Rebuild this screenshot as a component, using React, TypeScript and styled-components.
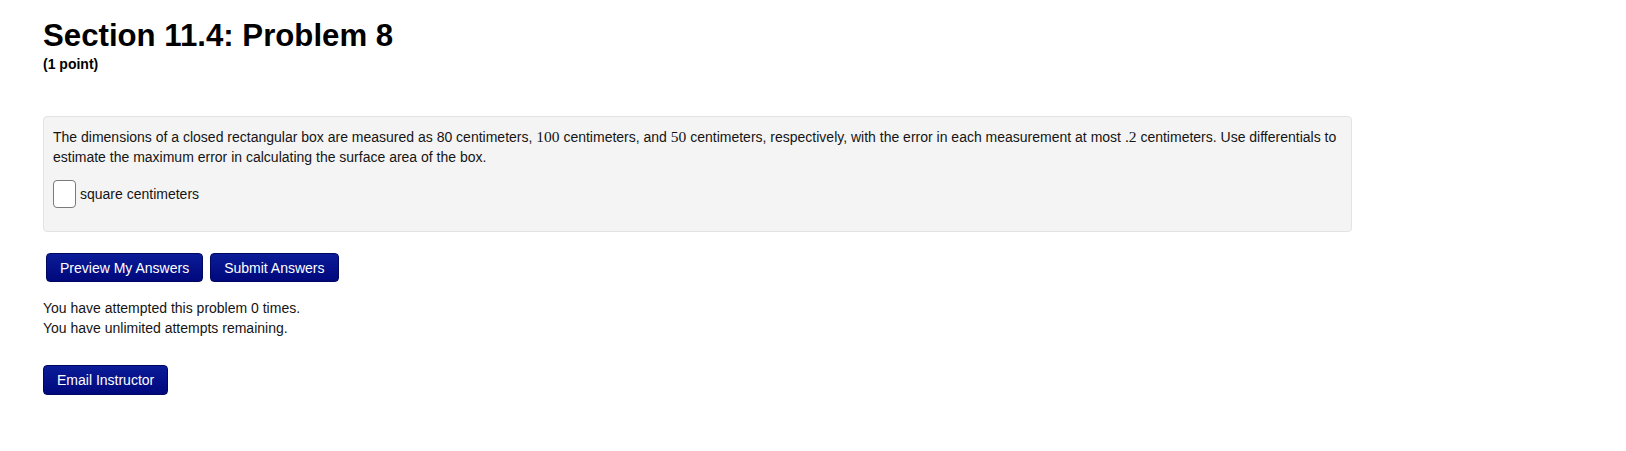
import React from "react";
import styled, { createGlobalStyle } from "styled-components";

const GlobalStyle = createGlobalStyle`
  html, body {
    margin: 0;
    padding: 0;
    background: #fff;
  }
  body {
    font-family: "Liberation Sans", Arial, sans-serif;
    font-size: 14px;
    color: #141414;
  }
`;

const Page = styled.div`
  padding: 18px 43px 40px;
  width: 1309px;
`;

const Title = styled.h1`
  font-size: 31.2px;
  font-weight: bold;
  margin: 0;
  line-height: 36px;
  color: #000;
`;

const Points = styled.div`
  font-size: 14px;
  font-weight: bold;
  margin-top: 2px;
  color: #000;
`;

const ProblemBox = styled.div`
  margin-top: 44px;
  background: #f4f4f4;
  border: 1px solid #e3e3e3;
  border-radius: 4px;
  padding: 10px 4px 23px 9px;
  line-height: 20px;
`;

const Paragraph = styled.p`
  margin: 0;
`;

const Num = styled.span`
  font-family: "Liberation Serif", "Times New Roman", serif;
  font-size: 15.5px;
  line-height: 1;
`;

const AnswerRow = styled.div`
  display: flex;
  align-items: center;
  gap: 4px;
  margin-top: 13px;
`;

const AnswerInput = styled.input`
  width: 23px;
  height: 28px;
  box-sizing: border-box;
  border: 1px solid #7a7a7a;
  border-radius: 4px;
  background: #fff;
  padding: 0;
`;

const ButtonRow = styled.div`
  display: flex;
  gap: 7px;
  margin-top: 21px;
  padding-left: 3px;
`;

const Button = styled.button<{ $tall?: boolean }>`
  height: ${(p) => (p.$tall ? "30px" : "29px")};
  padding: 0 13px;
  font-family: "Liberation Sans", Arial, sans-serif;
  font-size: 14px;
  color: #fff;
  border: 1px solid #00075e;
  border-radius: 4px;
  background: linear-gradient(#0b1c98, #00087c);
  cursor: pointer;
`;

const Attempts = styled.div`
  margin-top: 16px;
  line-height: 20px;
`;

const EmailRow = styled.div`
  margin-top: 27px;
`;

export default function App() {
  return (
    <>
      <GlobalStyle />
      <Page>
        <Title>Section 11.4: Problem 8</Title>
        <Points>(1 point)</Points>
        <ProblemBox>
          <Paragraph>
            The dimensions of a closed rectangular box are measured as 80 centimeters,{" "}
            <Num>100</Num> centimeters, and <Num>50</Num> centimeters, respectively, with the
            error in each measurement at most <Num>.2</Num> centimeters. Use differentials to
            estimate the maximum error in calculating the surface area of the box.
          </Paragraph>
          <AnswerRow>
            <AnswerInput type="text" aria-label="answer" />
            <span>square centimeters</span>
          </AnswerRow>
        </ProblemBox>
        <ButtonRow>
          <Button>Preview My Answers</Button>
          <Button>Submit Answers</Button>
        </ButtonRow>
        <Attempts>
          You have attempted this problem 0 times.
          <br />
          You have unlimited attempts remaining.
        </Attempts>
        <EmailRow>
          <Button $tall>Email Instructor</Button>
        </EmailRow>
      </Page>
    </>
  );
}
